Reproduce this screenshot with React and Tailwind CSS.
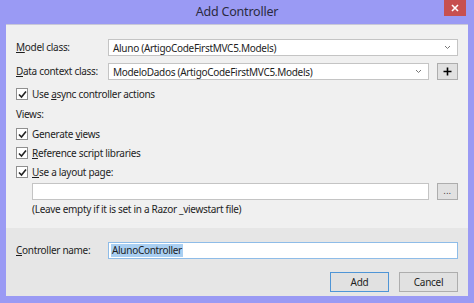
import React from "react";

// Add Controller dialog (Visual Studio, Windows 8 frame)

function Check() {
  return (
    <div className="w-[12px] h-[12px] border border-[#8f8f8f] bg-white flex items-center justify-center shrink-0">
      <svg width="9" height="9" viewBox="0 0 9 9">
        <path d="M1 4.5 L3.5 7 L8 1.5" fill="none" stroke="#222" strokeWidth="1.6" />
      </svg>
    </div>
  );
}

function CheckRow({ children }) {
  return (
    <div className="flex items-center gap-[4px] h-[12px]">
      <Check />
      <span className="leading-none whitespace-nowrap">{children}</span>
    </div>
  );
}

function Combo({ text, className }) {
  return (
    <div className={`h-[17px] border border-[#c4c4c4] bg-white flex items-center pl-[4px] pr-[6px] ${className}`}>
      <span className="flex-1 whitespace-nowrap leading-[14px]">{text}</span>
      <svg width="7" height="5" viewBox="0 0 7 5">
        <path d="M1 1 L3.5 3.5 L6 1" fill="none" stroke="#777" strokeWidth="1" />
      </svg>
    </div>
  );
}

export default function App() {
  return (
    <div
      className="w-[474px] h-[303px] bg-[#9a9af4] flex flex-col text-[10px] tracking-[-0.3px] text-[#1e1e1e]"
      style={{ fontFamily: '"Noto Sans", "Open Sans", sans-serif' }}
    >
      <div className="h-[24px] flex items-center relative shrink-0">
        <div className="flex-1 text-center text-[12.5px] tracking-[-0.2px] text-[#2b2b40] pt-[1px]">Add Controller</div>
        <div className="absolute right-[8px] top-0 w-[22px] h-[16px] bg-[#c75050] flex items-center justify-center">
          <svg width="8" height="8" viewBox="0 0 8 8">
            <path d="M1 1 L7 7 M7 1 L1 7" stroke="#fff" strokeWidth="1.6" />
          </svg>
        </div>
      </div>

      <div className="mx-[6px] flex-1 flex flex-col border-t border-[#c8c8d8]">
        <div className="bg-[#f0f0f0] h-[203px] px-[10px] flex flex-col">
          <div className="mt-[14px] flex items-center">
            <span className="w-[92px] shrink-0 whitespace-nowrap"><u>M</u>odel class:</span>
            <Combo text="Aluno (ArtigoCodeFirstMVC5.Models)" className="flex-1" />
          </div>
          <div className="mt-[7px] flex items-center">
            <span className="w-[92px] shrink-0 whitespace-nowrap"><u>D</u>ata context class:</span>
            <Combo text="ModeloDados (ArtigoCodeFirstMVC5.Models)" className="flex-1" />
            <div className="ml-[8px] w-[21px] h-[17px] border border-[#adadad] bg-[#e1e1e1] flex items-center justify-center shrink-0">
              <svg width="9" height="9" viewBox="0 0 9 9">
                <path d="M4.5 0.5 V8.5 M0.5 4.5 H8.5" stroke="#000" strokeWidth="1.6" />
              </svg>
            </div>
          </div>
          <div className="mt-[8px]">
            <CheckRow>Use <u>a</u>sync controller actions</CheckRow>
          </div>
          <div className="mt-[7px] h-[14px] flex items-center leading-none">Views:</div>
          <div className="mt-[7px]">
            <CheckRow>Generate <u>v</u>iews</CheckRow>
          </div>
          <div className="mt-[7px]">
            <CheckRow><u>R</u>eference script libraries</CheckRow>
          </div>
          <div className="mt-[7px]">
            <CheckRow><u>U</u>se a layout page:</CheckRow>
          </div>
          <div className="mt-[5px] pl-[16px] flex items-center">
            <div className="flex-1 h-[17px] border border-[#c4c4c4] bg-white" />
            <div className="ml-[8px] w-[21px] h-[17px] border border-[#adadad] bg-[#e1e1e1] flex items-end justify-center pb-[4px] shrink-0">
              <span className="text-[8px] leading-none tracking-[0.5px]">...</span>
            </div>
          </div>
          <div className="mt-[2px] pl-[16px] h-[14px] flex items-center leading-none whitespace-nowrap">
            (Leave empty if it is set in a Razor _viewstart file)
          </div>
        </div>

        <div className="bg-[#e6e6e6] flex-1 px-[10px] flex flex-col">
          <div className="mt-[14px] flex items-center">
            <span className="w-[92px] shrink-0 whitespace-nowrap"><u>C</u>ontroller name:</span>
            <div className="flex-1 h-[17px] border border-[#8ebce8] bg-white flex items-center pl-[2px]">
              <span className="bg-[#a9cff2] px-[1px] leading-[13px]">AlunoController</span>
            </div>
          </div>
          <div className="mt-[13px] flex justify-end gap-[10px]">
            <div className="w-[59px] h-[20px] border border-[#4f95d6] bg-[#e1e1e1] flex items-center justify-center">Add</div>
            <div className="w-[59px] h-[20px] border border-[#adadad] bg-[#e1e1e1] flex items-center justify-center">Cancel</div>
          </div>
        </div>
      </div>
      <div className="h-[7px] shrink-0" />
    </div>
  );
}
